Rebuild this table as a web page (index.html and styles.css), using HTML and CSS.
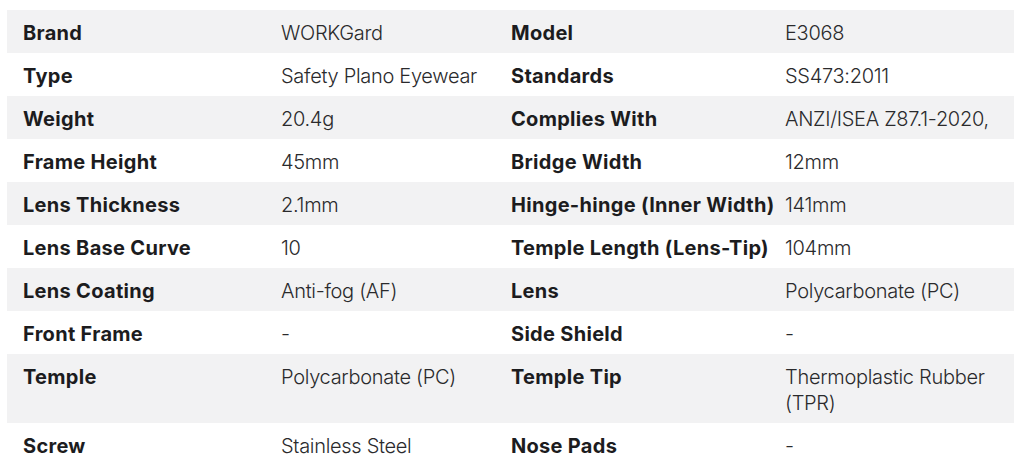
FILE: index.html
```html
<!DOCTYPE html>
<html>
<head>
<meta charset="utf-8">
<link rel="stylesheet" href="styles.css">
</head>
<body>
<div class="specs">
  <div class="row"><div class="k">Brand</div><div class="v">WORKGard</div><div class="k">Model</div><div class="v">E3068</div></div>
  <div class="row"><div class="k">Type</div><div class="v">Safety Plano Eyewear</div><div class="k">Standards</div><div class="v">SS473:2011</div></div>
  <div class="row"><div class="k">Weight</div><div class="v">20.4g</div><div class="k">Complies With</div><div class="v">ANZI/ISEA Z87.1-2020,</div></div>
  <div class="row"><div class="k">Frame Height</div><div class="v">45mm</div><div class="k">Bridge Width</div><div class="v">12mm</div></div>
  <div class="row"><div class="k">Lens Thickness</div><div class="v">2.1mm</div><div class="k">Hinge-hinge (Inner Width)</div><div class="v">141mm</div></div>
  <div class="row"><div class="k">Lens Base Curve</div><div class="v">10</div><div class="k">Temple Length (Lens-Tip)</div><div class="v">104mm</div></div>
  <div class="row"><div class="k">Lens Coating</div><div class="v">Anti-fog (AF)</div><div class="k">Lens</div><div class="v">Polycarbonate (PC)</div></div>
  <div class="row"><div class="k">Front Frame</div><div class="v">-</div><div class="k">Side Shield</div><div class="v">-</div></div>
  <div class="row"><div class="k">Temple</div><div class="v">Polycarbonate (PC)</div><div class="k">Temple Tip</div><div class="v">Thermoplastic Rubber (TPR)</div></div>
  <div class="row"><div class="k">Screw</div><div class="v">Stainless Steel</div><div class="k">Nose Pads</div><div class="v">-</div></div>
</div>
</body>
</html>
```
FILE: styles.css
```css
html, body {
  margin: 0;
  background: #ffffff;
}
.specs {
  margin: 10px 0 0 7px;
  width: 1007px;
  font-family: Inter, "Noto Sans", sans-serif;
  font-size: 20px;
  line-height: 26px;
}
.row {
  display: grid;
  grid-template-columns: 258px 230px 274px 1fr;
  padding-left: 11px;
}
.row:nth-child(odd) {
  background: #f2f2f3;
}
.k, .v {
  padding: 10px 5px 7px;
}
.k {
  font-weight: 700;
  letter-spacing: 0.3px;
  color: #1c1c1e;
}
.v {
  font-weight: 300;
  letter-spacing: -0.3px;
  color: #2a2a2c;
}
```
